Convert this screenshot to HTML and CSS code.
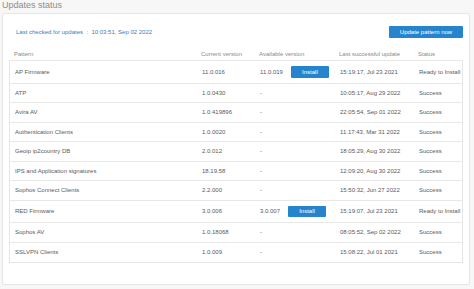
FILE: index.html
```html
<!DOCTYPE html>
<html>
<head>
  <meta charset="UTF-8">
  <title>Updates status</title>
  <link rel="stylesheet" href="styles.css">
</head>
<body>
  <div class="page-title">Updates status</div>

  <div class="card">
    <div class="top-bar">
      <span class="last-checked">Last checked for updates&nbsp; :&nbsp; 10:03:51, Sep 02 2022</span>
      <button class="primary-btn update-btn">Update pattern now</button>
    </div>

    <div class="grid-row header-row">
      <div>Pattern</div>
      <div>Current version</div>
      <div>Available version</div>
      <div>Last successful update</div>
      <div>Status</div>
    </div>

    <div class="pattern-list">
      <div class="grid-row">
        <div>AP Firmware</div>
        <div>11.0.016</div>
        <div class="avail">11.0.019 <button class="primary-btn install-btn">Install</button></div>
        <div>15:19:17, Jul 23 2021</div>
        <div>Ready to Install</div>
      </div>
      <div class="grid-row">
        <div>ATP</div>
        <div>1.0.0430</div>
        <div class="avail">-</div>
        <div>10:05:17, Aug 29 2022</div>
        <div>Success</div>
      </div>
      <div class="grid-row">
        <div>Avira AV</div>
        <div>1.0.419896</div>
        <div class="avail">-</div>
        <div>22:05:54, Sep 01 2022</div>
        <div>Success</div>
      </div>
      <div class="grid-row">
        <div>Authentication Clients</div>
        <div>1.0.0020</div>
        <div class="avail">-</div>
        <div>11:17:43, Mar 31 2022</div>
        <div>Success</div>
      </div>
      <div class="grid-row">
        <div>Geoip ip2country DB</div>
        <div>2.0.012</div>
        <div class="avail">-</div>
        <div>18:05:29, Aug 30 2022</div>
        <div>Success</div>
      </div>
      <div class="grid-row">
        <div>IPS and Application signatures</div>
        <div>18.19.58</div>
        <div class="avail">-</div>
        <div>12:09:20, Aug 30 2022</div>
        <div>Success</div>
      </div>
      <div class="grid-row">
        <div>Sophos Connect Clients</div>
        <div>2.2.000</div>
        <div class="avail">-</div>
        <div>15:50:32, Jun 27 2022</div>
        <div>Success</div>
      </div>
      <div class="grid-row">
        <div>RED Firmware</div>
        <div>3.0.006</div>
        <div class="avail">3.0.007 <button class="primary-btn install-btn">Install</button></div>
        <div>15:19:07, Jul 23 2021</div>
        <div>Ready to Install</div>
      </div>
      <div class="grid-row">
        <div>Sophos AV</div>
        <div>1.0.18068</div>
        <div class="avail">-</div>
        <div>08:05:52, Sep 02 2022</div>
        <div>Success</div>
      </div>
      <div class="grid-row">
        <div>SSLVPN Clients</div>
        <div>1.0.009</div>
        <div class="avail">-</div>
        <div>15:08:22, Jul 01 2021</div>
        <div>Success</div>
      </div>
    </div>
  </div>
</body>
</html>
```

FILE: styles.css
```css
body {
  margin: 0;
  width: 474px;
  height: 289px;
  overflow: hidden;
  background-color: #f7f7f7;
  font-family: "Liberation Sans", Arial, sans-serif;
  color: #5a5a5a;
}

* {
  box-sizing: border-box;
}

/* 页面标题 */
.page-title {
  height: 13px;
  line-height: 11px;
  padding-left: 2px;
  font-size: 9px;
  color: #8c8c8c;
}

/* 白色卡片 */
.card {
  margin-left: 2px;
  width: 468px;
  height: 272px;
  padding: 12px 6px 0 6px;
  background-color: white;
  border: 1px solid #e6e6e6;
  border-radius: 2px;
}

.top-bar {
  display: flex;
  align-items: center;
  justify-content: space-between;
  height: 12px;
  padding-left: 7px;
  margin-bottom: 9px;
}

.last-checked {
  font-size: 6px;
  color: #2f82c4;
}

button {
  border: none;
  cursor: pointer;
  font-family: inherit;
  padding: 0;
}

.primary-btn {
  background: #2684cc;
  color: white;
  border-radius: 1px;
}

.update-btn {
  width: 74px;
  height: 11.5px;
  font-size: 6px;
}

.install-btn {
  width: 38px;
  height: 11.5px;
  font-size: 6px;
  margin-left: 8px;
}

/* 表格 */
.grid-row {
  display: grid;
  grid-template-columns: 187px 58px 80px 79px 1fr;
  align-items: center;
  min-height: 19.5px;
  padding: 5px 0;
  font-size: 6px;
  border-bottom: 1px solid #e8e8e8;
}

.grid-row > div {
  padding-left: 5px;
  white-space: nowrap;
}

.header-row {
  min-height: 13px;
  padding: 0;
  border-bottom: none;
  color: #8a8a8a;
}

.pattern-list {
  border: 1px solid #e6e6e6;
}

.pattern-list .grid-row:last-child {
  border-bottom: none;
}

.avail {
  display: flex;
  align-items: center;
}
```
